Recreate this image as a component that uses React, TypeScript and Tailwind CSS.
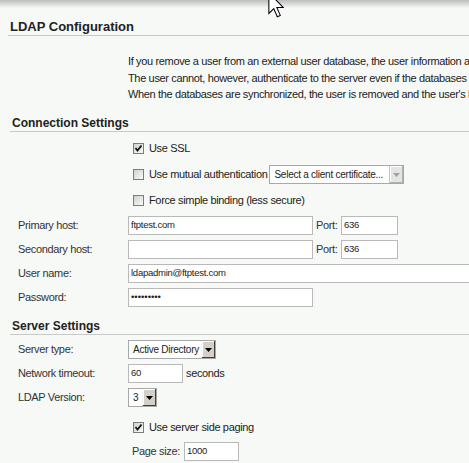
import React from "react";

const Checkbox = ({ checked }: { checked?: boolean }) => (
  <span className="relative inline-block w-[11px] h-[11px] border border-[#7c7c7c] bg-linear-to-br from-[#d0d0cc] to-[#fafafa] shrink-0">
    {checked && (
      <svg viewBox="0 0 11 11" className="absolute -left-px -top-px w-[11px] h-[11px]">
        <path d="M2.5 5 L4.5 7.5 L8.5 2.5" fill="none" stroke="#111" strokeWidth="1.8" />
      </svg>
    )}
  </span>
);

const TextBox = ({ w, value, className = "" }: { w: string; value?: string; className?: string }) => (
  <div
    className={`h-[19px] ${w} border border-[#b9b9b9] bg-white flex items-center pl-[2px] text-[9.5px] tracking-[-0.25px] text-[#222] whitespace-nowrap overflow-hidden ${className}`}
  >
    {value}
  </div>
);

const Arrow = ({ disabled }: { disabled?: boolean }) => (
  <span
    className={`h-full w-[14px] flex items-center justify-center border-l ${
      disabled
        ? "bg-[#e4e4e4] border-[#c4c4c4] shadow-[inset_-1px_-1px_0_#b0b0b0,inset_1px_1px_0_#ffffff]"
        : "bg-[#d4d0c8] border-[#f4f4f4] shadow-[inset_-1px_-1px_0_#404040,inset_1px_1px_0_#ffffff]"
    }`}
  >
    <svg viewBox="0 0 7 4" className="w-[7px] h-[4px]">
      <path d="M0 0 H7 L3.5 4 Z" fill={disabled ? "#a0a0a0" : "#000"} />
    </svg>
  </span>
);

const Select = ({ w, value, disabled }: { w: string; value: string; disabled?: boolean }) => (
  <div className={`h-[19px] ${w} border border-[#a8a8a8] bg-white flex items-stretch`}>
    <span className="flex-1 flex items-center pl-[4px] whitespace-nowrap overflow-hidden text-[10px] tracking-[-0.25px] text-[#222]">
      {value}
    </span>
    <Arrow disabled={disabled} />
  </div>
);

const Heading = ({ children, className = "" }: { children: React.ReactNode; className?: string }) => (
  <div className={`ml-[10px] pl-[2px] border-b border-[#c9c9c9] text-[12px] leading-[16px] font-bold text-[#222] tracking-[0px] ${className}`}>
    {children}
  </div>
);

const Field = ({ label, children }: { label: string; children: React.ReactNode }) => (
  <div className="h-[24px] flex items-center">
    <span className="w-[128px] pl-[18px] text-[#333] shrink-0">{label}</span>
    {children}
  </div>
);

const CheckRow = ({ checked, label, children, h = "h-[26px]" }: { checked?: boolean; label: string; children?: React.ReactNode; h?: string }) => (
  <div className={`${h} flex items-center pl-[133px]`}>
    <Checkbox checked={checked} />
    <span className="ml-[5px] text-[#222] whitespace-nowrap">{label}</span>
    {children}
  </div>
);

export default function App() {
  return (
    <div className="relative w-[469px] h-[463px] overflow-hidden bg-[#f6f9f6] font-['Liberation_Sans',Arial,sans-serif] text-[11px] tracking-[-0.35px]">
      <div className="h-[8px] bg-linear-to-b from-[#bdbdbd] to-[#f6f9f6]" />

      <div className="ml-[8px] pl-[2px] pt-[11px] border-b border-[#c9c9c9] text-[13px] leading-[16px] font-bold text-[#222] tracking-[0px]">
        LDAP Configuration
      </div>

      <div className="mt-[17px] pl-[128px] leading-[16.5px] text-[#222] whitespace-nowrap">
        <p>If you remove a user from an external user database, the user information a</p>
        <p>The user cannot, however, authenticate to the server even if the databases</p>
        <p>When the databases are synchronized, the user is removed and the user's h</p>
      </div>

      <Heading className="mt-[12px]">Connection Settings</Heading>

      <div className="mt-[4px]">
        <CheckRow checked label="Use SSL" />
        <CheckRow label="Use mutual authentication">
          <div className="ml-[2px]">
            <Select w="w-[135px]" value="Select a client certificate..." disabled />
          </div>
        </CheckRow>
        <CheckRow label="Force simple binding (less secure)" />

        <Field label="Primary host:">
          <TextBox w="w-[185px]" value="ftptest.com" />
          <span className="ml-[3px] w-[25px] text-[#333]">Port:</span>
          <TextBox w="w-[57px]" value="636" />
        </Field>
        <Field label="Secondary host:">
          <TextBox w="w-[185px]" />
          <span className="ml-[3px] w-[25px] text-[#333]">Port:</span>
          <TextBox w="w-[57px]" value="636" />
        </Field>
        <Field label="User name:">
          <TextBox w="w-[360px]" value="ldapadmin@ftptest.com" className="shrink-0" />
        </Field>
        <Field label="Password:">
          <TextBox w="w-[185px]" value="•••••••••" className="text-[8px] tracking-[0px]" />
        </Field>
      </div>

      <Heading className="mt-[8px]">Server Settings</Heading>

      <div className="mt-[3px]">
        <Field label="Server type:">
          <Select w="w-[88px]" value="Active Directory" />
        </Field>
        <Field label="Network timeout:">
          <TextBox w="w-[55px]" value="60" />
          <span className="ml-[3px] text-[#222]">seconds</span>
        </Field>
        <Field label="LDAP Version:">
          <Select w="w-[29px]" value="3" />
        </Field>
        <CheckRow checked label="Use server side paging" h="h-[26px] mt-[5px]" />
        <div className="h-[22px] flex items-center pl-[132px]">
          <span className="text-[#333]">Page size:</span>
          <TextBox w="w-[55px]" value="1000" className="ml-[4px]" />
        </div>
      </div>

      <svg
        viewBox="0 0 12 20"
        className="absolute left-[268px] top-[-8px] w-[16px] h-[26px]"
      >
        <path
          d="M0.5 0.5 L0.5 16.5 L4.3 12.8 L7 19 L9.3 18 L6.6 11.9 L11.5 11.9 Z"
          fill="#fff"
          stroke="#000"
          strokeWidth="0.8"
          strokeLinejoin="miter"
        />
      </svg>
    </div>
  );
}
